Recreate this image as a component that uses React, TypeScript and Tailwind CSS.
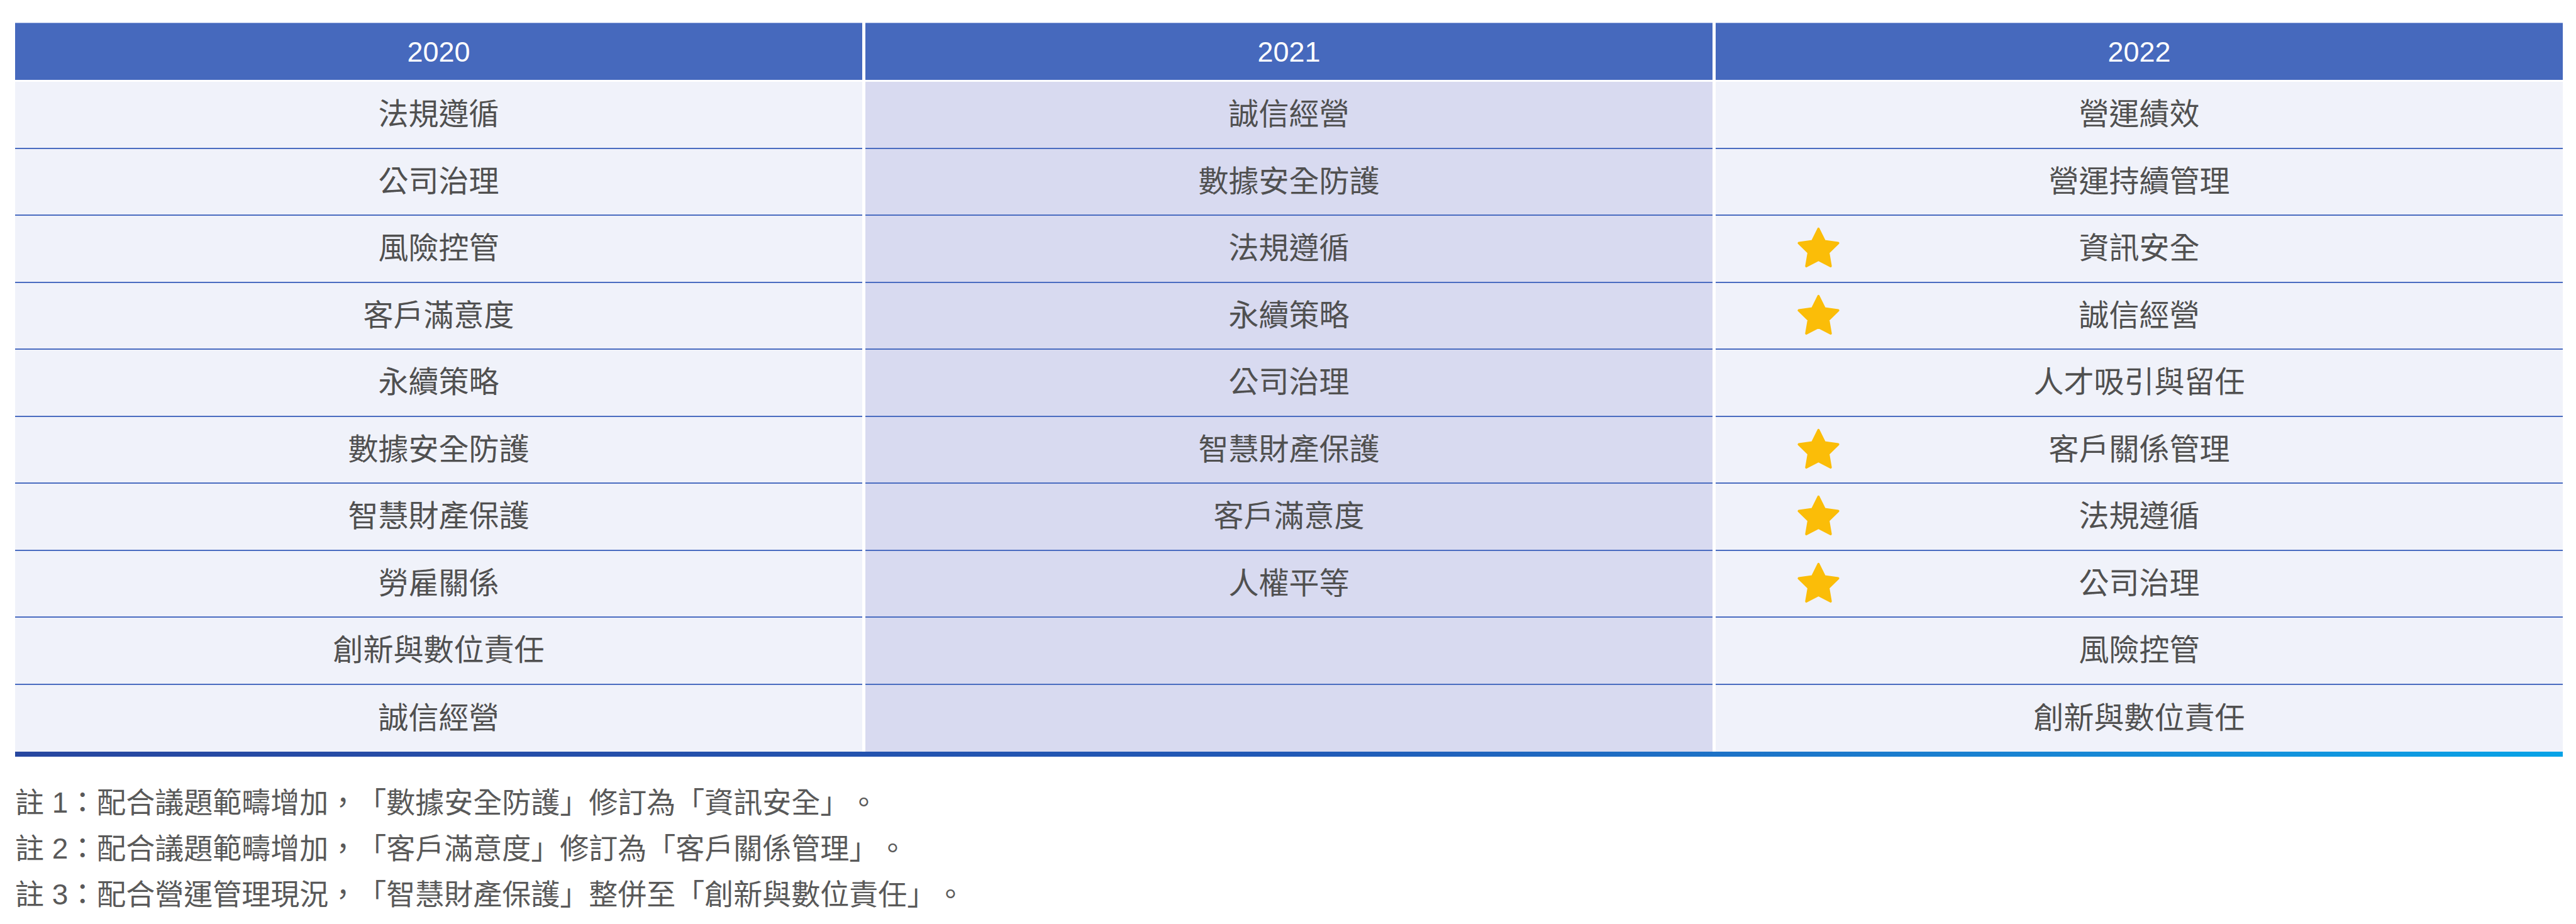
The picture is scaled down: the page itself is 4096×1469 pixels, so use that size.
import React from "react";

type Cell = { text: string; star?: boolean };

const YEARS = ["2020", "2021", "2022"];

const COL_2020: Cell[] = [
  { text: "法規遵循" },
  { text: "公司治理" },
  { text: "風險控管" },
  { text: "客戶滿意度" },
  { text: "永續策略" },
  { text: "數據安全防護" },
  { text: "智慧財產保護" },
  { text: "勞雇關係" },
  { text: "創新與數位責任" },
  { text: "誠信經營" },
];

const COL_2021: Cell[] = [
  { text: "誠信經營" },
  { text: "數據安全防護" },
  { text: "法規遵循" },
  { text: "永續策略" },
  { text: "公司治理" },
  { text: "智慧財產保護" },
  { text: "客戶滿意度" },
  { text: "人權平等" },
  { text: "" },
  { text: "" },
];

const COL_2022: Cell[] = [
  { text: "營運績效" },
  { text: "營運持續管理" },
  { text: "資訊安全", star: true },
  { text: "誠信經營", star: true },
  { text: "人才吸引與留任" },
  { text: "客戶關係管理", star: true },
  { text: "法規遵循", star: true },
  { text: "公司治理", star: true },
  { text: "風險控管" },
  { text: "創新與數位責任" },
];

const NOTES = [
  "註 1：配合議題範疇增加，「數據安全防護」修訂為「資訊安全」。",
  "註 2：配合議題範疇增加，「客戶滿意度」修訂為「客戶關係管理」。",
  "註 3：配合營運管理現況，「智慧財產保護」整併至「創新與數位責任」。",
];

function Star() {
  return (
    <svg viewBox="0 0 24 24" className="w-[79px] h-[75px]">
      <polygon
        points="12,2 15.09,8.26 22,9.27 17,14.14 18.18,21.02 12,17.77 5.82,21.02 7,14.14 2,9.27 8.91,8.26"
        fill="#fbbd08"
        stroke="#fbbd08"
        strokeWidth="1.2"
        strokeLinejoin="round"
      />
    </svg>
  );
}

export default function App() {
  const rows = COL_2020.map((c, i) => [c, COL_2021[i], COL_2022[i]]);

  return (
    <div
      className="w-[4096px] h-[1469px] bg-white pt-[36px] pl-[24px] overflow-hidden"
      style={{ fontFamily: '"Liberation Sans", "Noto Sans CJK TC", sans-serif' }}
    >
      <div className="w-[4051px]">
        {/* header */}
        <div className="grid grid-cols-3 gap-x-[5px]">
          {YEARS.map((y) => (
            <div
              key={y}
              className="h-[91px] bg-[#4669bd] border-t border-[#8ea4dc] flex items-center justify-center text-white text-[45px] leading-none"
            >
              {y}
            </div>
          ))}
        </div>
        <div className="h-[3px]" />

        {/* body */}
        <div className="grid grid-cols-3 gap-x-[5px]">
          {rows.map((row, i) =>
            row.map((cell, j) => (
              <div
                key={`${i}-${j}`}
                className={`relative h-[106.5px] flex items-center justify-center text-[48px] leading-none text-[#505050] ${
                  j === 1 ? "bg-[#d8daf0]" : "bg-[#f0f2fa]"
                } ${i < rows.length - 1 ? "border-b-[2.5px] border-[#4a6cc0]" : ""}`}
              >
                {cell.star && (
                  <div className="absolute left-[124px] top-1/2 -translate-y-1/2 flex">
                    <Star />
                  </div>
                )}
                {cell.text}
              </div>
            ))
          )}
        </div>
        <div className="h-[8px] bg-gradient-to-r from-[#2747a0] via-[#2159b6] to-[#07a3e7]" />
      </div>

      {/* notes */}
      <div className="mt-[37px] text-[46px] leading-[73px] text-[#595959] [text-spacing-trim:space-all]">
        {NOTES.map((n) => (
          <p key={n}>{n}</p>
        ))}
      </div>
    </div>
  );
}
